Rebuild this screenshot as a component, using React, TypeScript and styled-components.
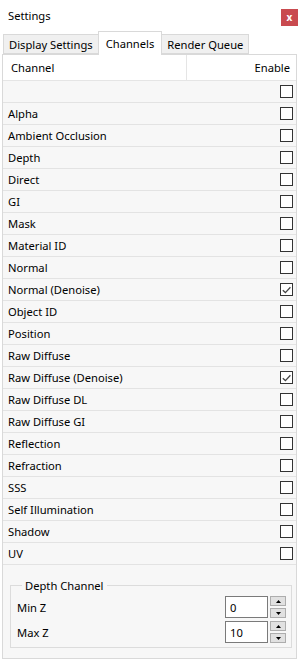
import React, { useState } from 'react'
import styled, { createGlobalStyle } from 'styled-components'

const GlobalStyle = createGlobalStyle`
  html, body {
    margin: 0;
    padding: 0;
    background: #ffffff;
  }
  body {
    font-family: 'Noto Sans', 'Open Sans', sans-serif;
    font-size: 11.2px;
    color: #000;
  }
`

const Window = styled.div`
  width: 301px;
  height: 662px;
  display: flex;
  flex-direction: column;
  background: #ffffff;
  box-sizing: border-box;
`

const TitleBar = styled.div`
  height: 31px;
  display: flex;
  align-items: center;
  justify-content: space-between;
  padding: 0 3px 0 8px;
  box-sizing: border-box;
`

const CloseButton = styled.div`
  width: 17px;
  height: 17px;
  margin-top: 3px;
  background: #c94a4f;
  color: #fff;
  font-size: 10px;
  font-weight: 700;
  display: flex;
  align-items: center;
  justify-content: center;
  line-height: 1;
`

const TabStrip = styled.div`
  height: 23px;
  display: flex;
  align-items: flex-end;
  padding-left: 3px;
  position: relative;
  z-index: 1;
`

const Tab = styled.div<{ $active?: boolean }>`
  box-sizing: border-box;
  height: ${({ $active }) => ($active ? '24px' : '20px')};
  margin-bottom: ${({ $active }) => ($active ? '-1px' : '0')};
  padding: ${({ $active }) => ($active ? '0 7px 1px' : '0 5px')};
  margin-left: ${({ $active }) => ($active ? '-1px' : '0')};
  margin-right: ${({ $active }) => ($active ? '-1px' : '0')};
  position: relative;
  z-index: ${({ $active }) => ($active ? 2 : 1)};
  background: ${({ $active }) => ($active ? '#ffffff' : '#f0f0f0')};
  border: 1px solid #d9d9d9;
  border-bottom: ${({ $active }) => ($active ? 'none' : '1px solid #d9d9d9')};
  display: flex;
  align-items: center;
  white-space: nowrap;
`

const Page = styled.div`
  flex: 1;
  display: flex;
  flex-direction: column;
  margin: 0 4px 3px 2px;
  border: 1px solid #d9d9d9;
  background: #f7f7f7;
`

const HeaderRow = styled.div`
  height: 25px;
  display: flex;
  background: #ffffff;
  border-bottom: 1px solid #e5e5e5;
`

const HeaderCell = styled.div<{ $right?: boolean }>`
  display: flex;
  align-items: center;
  box-sizing: border-box;
  ${({ $right }) =>
    $right
      ? `flex: 1; justify-content: flex-end; padding-right: 6px; border-left: 1px solid #e5e5e5;`
      : `width: 183px; padding-left: 8px;`}
`

const Row = styled.div`
  height: 22px;
  display: flex;
  align-items: center;
  justify-content: space-between;
  padding: 0 3px 1px 5px;
  border-bottom: 1px solid #e3e3e3;
  box-sizing: border-box;
`

const Check = styled.div`
  width: 13px;
  height: 13px;
  margin-top: 1px;
  box-sizing: border-box;
  border: 1px solid #333333;
  background: #ffffff;
  display: flex;
  align-items: center;
  justify-content: center;
`

const GroupBox = styled.fieldset`
  margin: 13px 4px 7px 7px;
  padding: 3px 5px 4px 6px;
  border: 1px solid #dcdcdc;
  display: flex;
  flex-direction: column;
  gap: 3px;
  min-width: 0;
`

const Legend = styled.legend`
  padding: 0 3px;
  margin-left: 5px;
`

const FieldRow = styled.div`
  height: 22px;
  display: flex;
  align-items: center;
`

const FieldLabel = styled.div`
  flex: 1;
`

const NumberBox = styled.div`
  width: 43px;
  height: 22px;
  box-sizing: border-box;
  border: 1px solid #7a7a7a;
  background: #fff;
  display: flex;
  align-items: center;
  padding-left: 4px;
`

const Spinner = styled.div`
  width: 16px;
  height: 22px;
  margin-left: 2px;
  display: flex;
  flex-direction: column;
  justify-content: space-between;
`

const SpinButton = styled.div`
  height: 10px;
  box-sizing: border-box;
  border: 1px solid #adadad;
  background: #e1e1e1;
  display: flex;
  align-items: center;
  justify-content: center;
`

const channels: [string, boolean][] = [
  ['', false],
  ['Alpha', false],
  ['Ambient Occlusion', false],
  ['Depth', false],
  ['Direct', false],
  ['GI', false],
  ['Mask', false],
  ['Material ID', false],
  ['Normal', false],
  ['Normal (Denoise)', true],
  ['Object ID', false],
  ['Position', false],
  ['Raw Diffuse', false],
  ['Raw Diffuse (Denoise)', true],
  ['Raw Diffuse DL', false],
  ['Raw Diffuse GI', false],
  ['Reflection', false],
  ['Refraction', false],
  ['SSS', false],
  ['Self Illumination', false],
  ['Shadow', false],
  ['UV', false],
]

const Tick = () => (
  <svg width="9" height="8" viewBox="0 0 9 8">
    <path d="M0.8 4.2 L3.4 6.6 L8.4 1.2" fill="none" stroke="#444" strokeWidth="1.3" />
  </svg>
)

const Arrow: React.FC<{ up?: boolean }> = ({ up }) => (
  <svg width="5" height="3" viewBox="0 0 5 3">
    <path d={up ? 'M0 3 L2.5 0 L5 3 Z' : 'M0 0 L2.5 3 L5 0 Z'} fill="#000" />
  </svg>
)

const Spin = () => (
  <Spinner>
    <SpinButton>
      <Arrow up />
    </SpinButton>
    <SpinButton>
      <Arrow />
    </SpinButton>
  </Spinner>
)

const App: React.FC = () => {
  const [enabled, setEnabled] = useState(channels.map((c) => c[1]))

  return (
    <Window>
      <GlobalStyle />
      <TitleBar>
        <span>Settings</span>
        <CloseButton>x</CloseButton>
      </TitleBar>
      <TabStrip>
        <Tab>Display Settings</Tab>
        <Tab $active>Channels</Tab>
        <Tab>Render Queue</Tab>
      </TabStrip>
      <Page>
        <HeaderRow>
          <HeaderCell>Channel</HeaderCell>
          <HeaderCell $right>Enable</HeaderCell>
        </HeaderRow>
        {channels.map(([name], i) => (
          <Row key={i}>
            <span>{name}</span>
            <Check
              onClick={() => setEnabled(enabled.map((v, j) => (j === i ? !v : v)))}
            >
              {enabled[i] && <Tick />}
            </Check>
          </Row>
        ))}
        <GroupBox>
          <Legend>Depth Channel</Legend>
          <FieldRow>
            <FieldLabel>Min Z</FieldLabel>
            <NumberBox>0</NumberBox>
            <Spin />
          </FieldRow>
          <FieldRow>
            <FieldLabel>Max Z</FieldLabel>
            <NumberBox>10</NumberBox>
            <Spin />
          </FieldRow>
        </GroupBox>
      </Page>
    </Window>
  )
}

export default App
